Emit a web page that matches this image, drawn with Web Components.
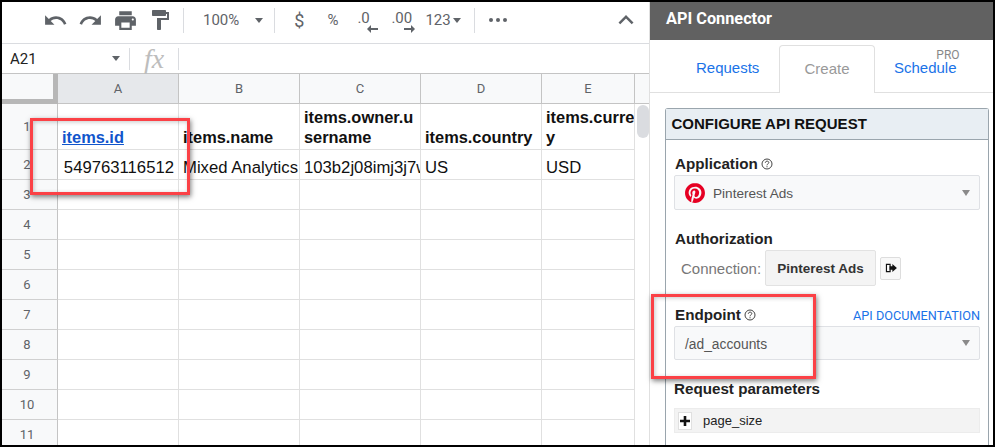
<!DOCTYPE html>
<html><head><meta charset="utf-8"><style>
html,body{margin:0;padding:0;background:#fff}
body{width:995px;height:447px;overflow:hidden}
</style></head><body>
<app-shell>
  <sheet-pane slot="left"></sheet-pane>
  <connector-sidebar slot="right"></connector-sidebar>
</app-shell>
<script>
const P={
undo:"M12.5 8c-2.65 0-5.05.99-6.9 2.6L2 7v9h9l-3.62-3.62c1.39-1.16 3.16-1.88 5.12-1.88 3.54 0 6.55 2.31 7.6 5.5l2.37-.78C21.08 11.03 17.15 8 12.5 8z",
redo:"M18.4 10.6C16.55 8.99 14.15 8 11.5 8c-4.65 0-8.58 3.03-9.96 7.22L3.9 16c1.05-3.19 4.05-5.5 7.6-5.5 1.95 0 3.73.72 5.12 1.88L13 16h9V7l-3.6 3.6z",
print:"M19 8H5c-1.66 0-3 1.34-3 3v6h4v4h12v-4h4v-6c0-1.66-1.34-3-3-3zm-3 11H8v-5h8v5zm3-7c-.55 0-1-.45-1-1s.45-1 1-1 1 .45 1 1-.45 1-1 1zm-1-9H6v4h12V3z",
paint:"M18 4V3c0-.55-.45-1-1-1H5c-.55 0-1 .45-1 1v4c0 .55.45 1 1 1h12c.55 0 1-.45 1-1V6h1v4H9v11c0 .55.45 1 1 1h2c.55 0 1-.45 1-1v-9h8V4h-3z",
chev:"M12 8l-6 6 1.41 1.41L12 10.83l4.59 4.58L18 14z",
pin:"M12.017 0C5.396 0 .029 5.367.029 11.987c0 5.079 3.158 9.417 7.618 11.162-.105-.949-.199-2.403.041-3.439.219-.937 1.406-5.957 1.406-5.957s-.359-.72-.359-1.781c0-1.663.967-2.911 2.168-2.911 1.024 0 1.518.769 1.518 1.688 0 1.029-.653 2.567-.992 3.992-.285 1.193.6 2.165 1.775 2.165 2.128 0 3.768-2.245 3.768-5.487 0-2.861-2.063-4.869-5.008-4.869-3.41 0-5.409 2.562-5.409 5.199 0 1.033.394 2.143.889 2.741.099.12.112.225.085.345-.09.375-.293 1.199-.334 1.363-.053.225-.172.271-.401.165-1.495-.69-2.433-2.878-2.433-4.646 0-3.776 2.748-7.252 7.92-7.252 4.158 0 7.392 2.967 7.392 6.923 0 4.135-2.607 7.462-6.233 7.462-1.214 0-2.354-.629-2.758-1.379l-.749 2.848c-.269 1.045-1.004 2.352-1.498 3.146 1.123.345 2.306.535 3.55.535 6.607 0 11.985-5.365 11.985-11.987C23.97 5.39 18.592.026 11.985.026L12.017 0z"
};
const ico=(d,s,c='#5f6368')=>`<svg width="${s}" height="${s}" viewBox="0 0 24 24" fill="${c}"><path d="${d}"/></svg>`;
const def=(n,html)=>customElements.define(n,class extends HTMLElement{constructor(){super();this.attachShadow({mode:'open'}).innerHTML=typeof html==='function'?html(this):html}});

def('app-shell',`<style>
:host{display:block;position:relative;width:995px;height:447px;box-sizing:border-box;overflow:hidden;border:2px solid #000;background:#fff}
.row{display:flex;height:100%}
.box{position:absolute;box-sizing:border-box;border:3px solid #fb4146;box-shadow:1px 2px 5px rgba(0,0,0,.5),inset 1px 1px 4px rgba(0,0,0,.22)}
.b1{left:28px;top:116px;width:160px;height:77px}
.b2{left:649px;top:292px;width:165px;height:85px}
</style><div class="row"><slot name="left"></slot><slot name="right"></slot></div>
<div class="box b1"></div><div class="box b2"></div>`);

def('tool-caret',`<style>:host{display:inline-block;flex:none;width:0;height:0;border-left:4.5px solid transparent;border-right:4.5px solid transparent;border-top:5px solid #5f6368}</style>`);

def('sheet-toolbar',`<style>
:host{display:flex;align-items:center;height:42px;box-sizing:border-box;padding:0 0 5px 35.5px;border-bottom:1px solid #dadce0;font:15px Roboto,sans-serif;color:#5f6368;flex:none}
.b{width:35px;display:flex;justify-content:center;align-items:center;flex:none}
.sep{width:1px;height:25px;background:#dadce0;flex:none}
.t{flex:none}
.dec{position:relative;flex:none;height:30px;display:block;line-height:27px}
.dec svg{position:absolute;top:20px}
.dots{display:flex;gap:3px;margin-left:14px}
.dots i{width:4px;height:4px;border-radius:50%;background:#5f6368}
</style>
<span class="b">${ico(P.undo,25)}</span><span class="b">${ico(P.redo,25)}</span><span class="b">${ico(P.print,25)}</span><span class="b">${ico(P.paint,24)}</span>
<span class="sep" style="margin-left:5.5px"></span>
<span class="t" style="margin-left:19px">100%</span><tool-caret style="margin-left:16px"></tool-caret>
<span class="sep" style="margin-left:11px"></span>
<span class="t" style="margin-left:19px;font-size:18px">$</span>
<span class="t" style="margin-left:23px">%</span>
<span class="dec" style="margin-left:19px;width:22px">.0<svg style="left:10px" width="11" height="8" viewBox="0 0 11 8" fill="#5f6368"><path d="M4 0v3h7v2H4v3L0 4z"/></svg></span>
<span class="dec" style="margin-left:12px;width:24px">.00<svg style="left:13px" width="11" height="8" viewBox="0 0 11 8" fill="#5f6368"><path d="M7 0v3H0v2h7v3l4-4z"/></svg></span>
<span class="t" style="margin-left:10px">123</span><tool-caret style="margin-left:2px"></tool-caret>
<span class="sep" style="margin-left:13px"></span>
<span class="dots"><i></i><i></i><i></i></span>
<span class="b" style="margin-left:102px">${ico(P.chev,30,'#5f6368')}</span>`);

def('formula-bar',`<style>
:host{display:flex;align-items:center;height:30px;box-sizing:border-box;border-bottom:1px solid #c4c4c4;flex:none;font:15px Roboto,sans-serif;color:#222;padding-left:8px}
.n{width:102px}
.sep{width:1px;height:22px;background:#dadce0;flex:none}
.fx{font:italic 28px "Liberation Serif",serif;color:#bdbdbd;width:48px;text-align:center;line-height:30px}
</style><span class="n">A21</span><tool-caret style="margin-right:9px"></tool-caret><span class="sep"></span><span class="fx">fx</span><span class="sep"></span>`);

def('sheet-grid',()=>{
 const cols=['A','B','C','D','E'];
 const heads=[['<a>items.id</a>','items.name','items.owner.u<br>sername','items.country','items.curre<br>y'],
 ['<span class="r">549763116512</span>','Mixed Analytics','103b2j08imj3j7w','US','USD']];
 let h=`<div class="corner"></div>`+cols.map((c,i)=>`<div class="ch ${i==0?'sel':''}">${c}</div>`).join('')+`<div class="ch end"></div>`;
 for(let r=1;r<=11;r++){
  h+=`<div class="rh">${r}</div>`;
  for(let c=0;c<5;c++){const v=r<=2?heads[r-1][c]:'';h+=`<div class="c ${r==1?'hd':''} ${r==2?'val':''}">${v}</div>`}
  h+=`<div class="sb">${r==1?'<i></i>':''}</div>`;
 }
 return `<style>
:host{display:grid;grid-template-columns:56px 121px 121px 121px 121px 93px 15px;grid-template-rows:30px 46px repeat(10,30px);overflow:hidden;flex:1;min-height:0;font:16.7px "Liberation Sans",Arial,sans-serif;color:#000}
div{box-sizing:border-box}
.corner{background:#f8f9fa;border-right:5px solid #b7b7b7;border-bottom:5px solid #b7b7b7}
.ch{background:#f8f9fa;border-right:1px solid #c4c4c4;border-bottom:1px solid #c4c4c4;font:13px Roboto,sans-serif;color:#5f6368;display:flex;align-items:center;justify-content:center}
.ch.sel{background:#e6e8eb}
.ch.end{border-right:0}
.rh{background:#f8f9fa;border-right:1px solid #c4c4c4;border-bottom:1px solid #d0d0d0;font:13px Roboto,sans-serif;color:#5f6368;display:flex;align-items:center;justify-content:center;padding-right:5px}
.c{border-right:1px solid #e0e0e0;border-bottom:1px solid #e0e0e0;overflow:hidden;white-space:nowrap;padding:0 4px}
.hd{font-weight:bold;font-size:16.4px;line-height:20px;display:flex;align-items:flex-end;padding-bottom:2px;color:#111}
.val{line-height:36px;color:#111}
.r{display:block;text-align:right}
a{color:#1155cc;text-decoration:underline}
.sb{position:relative;overflow:visible}
.sb i{position:absolute;left:2px;top:1px;width:12px;height:33px;border-radius:6px;background:#dadce0}
</style>${h}`});

def('sheet-pane',`<style>:host{display:flex;flex-direction:column;width:647px;height:100%;border-right:1px solid #e0e0e0;flex:none;overflow:hidden}</style>
<sheet-toolbar></sheet-toolbar><formula-bar></formula-bar><sheet-grid></sheet-grid>`);

def('help-mark',`<style>:host{display:inline-flex;margin-left:3px;vertical-align:-1px}</style><svg width="12" height="12" viewBox="0 0 12 12" fill="none" stroke="#444" stroke-width="1"><circle cx="6" cy="6" r="5"/><path d="M4.300 4.800c0-2.200 3.500-2.200 3.500-.2 0 1.200-1.800 1.200-1.800 2.700"/><path d="M6 8.200v1.100"/></svg>`);

def('select-box',`<style>
:host{display:flex;align-items:center;height:var(--h,35px);box-sizing:border-box;border:1px solid #dfe1e5;border-radius:2px;background:#f8f9fa;font:13.6px "Liberation Sans",Arial,sans-serif;color:#555;padding:0 10px;margin-left:8px;width:306px}
.s{flex:1;display:flex;align-items:center;gap:8px;font-size:var(--fs,13.6px);padding-top:var(--pt,1px)}
.a{width:0;height:0;border-left:4.5px solid transparent;border-right:4.5px solid transparent;border-top:6px solid #8a8a8a;margin-right:-1px}
</style><span class="s"><slot></slot></span><span class="a"></span>`);

def('connector-sidebar',`<style>
:host{display:block;width:343px;height:100%;overflow:hidden;flex:none;font-family:"Liberation Sans",Arial,sans-serif;color:#222}
header{height:38px;background:#616161;color:#fff;font:bold 16.3px Roboto,sans-serif;padding-left:16px;line-height:33px}
nav{display:flex;height:53px;box-sizing:border-box;border-bottom:1px solid #e0e0e0;padding-top:5px;padding-left:129px;font-size:15px;position:relative;color:#1a73e8}
nav span{display:block;line-height:46px}
.rq{position:absolute;left:46px;top:5px}
.cr{width:96px;height:48px;box-sizing:border-box;border:1px solid #e0e0e0;border-bottom:0;border-radius:4px 4px 0 0;background:#fff;color:#999;text-align:center}
.sc{position:relative;margin-left:19px}
.sc b{position:absolute;right:-3px;top:3px;font:12px Roboto,sans-serif;color:#888;line-height:14px}
.panel{margin:15px 0 0 15px;width:324px;box-sizing:border-box;border:1px solid #9aa5ad;border-bottom:0;border-radius:3px 3px 0 0;height:340px}
.ph{height:30px;background:#e8eef3;border-bottom:1px solid #9aa5ad;font:bold 15px "Liberation Sans",Arial,sans-serif;line-height:30px;padding-left:5.5px;color:#111}
.l{font:bold 15.2px "Liberation Sans",Arial,sans-serif;color:#222;padding-left:9px;height:20px;line-height:20px}
.conn{display:flex;align-items:center;margin:1px 0 0 15px;font-size:15px;color:#777}
.btn{margin-left:4px;width:111px;height:36px;box-sizing:border-box;background:#f4f4f4;border:1px solid #e2e2e2;border-radius:2px;color:#333;font:bold 13.5px "Liberation Sans",Arial,sans-serif;display:flex;align-items:center;justify-content:center}
.ib{margin-left:4px;width:21px;height:23px;box-sizing:border-box;border:1px solid #ddd;background:#f8f8f8;border-radius:2px;display:flex;align-items:center;justify-content:center}
.ep{display:flex;align-items:center;justify-content:space-between;width:314px}
.doc{font:12.7px Roboto,sans-serif;color:#1a73e8}
.pr{margin:0 0 0 8px;width:306px;height:25px;box-sizing:border-box;background:#f3f3f3;border:1px solid #ececec;display:flex;align-items:center;font:13px "Liberation Sans",Arial,sans-serif;color:#222}
.plus{width:14px;height:18px;margin:0 11px 0 3px;background:#fff;border:1px solid #e0e0e0;box-sizing:border-box;display:flex;align-items:center;justify-content:center}
</style>
<header>API Connector</header>
<nav><span class="rq">Requests</span><span class="cr">Create</span><span class="sc"><b>PRO</b>Schedule</span></nav>
<div class="panel">
 <div class="ph">CONFIGURE API REQUEST</div>
 <div class="l" style="margin-top:14px;margin-bottom:1px">Application<help-mark></help-mark></div>
 <select-box><svg width="20" height="20" viewBox="0 0 24 24" fill="#e60023"><path d="${P.pin}"/></svg>Pinterest Ads</select-box>
 <div class="l" style="margin-top:19px">Authorization</div>
 <div class="conn">Connection:<span class="btn">Pinterest Ads</span><span class="ib"><svg width="12" height="10" viewBox="0 0 13 11"><path d="M1.500 1.500h4v8h-4z" fill="#fff" stroke="#111" stroke-width="1.3"/><path d="M5 3.500h3V1l5 4.500-5 4.500V7.500H5z" fill="#111"/></svg></span></div>
 <div class="ep" style="margin-top:19px;margin-bottom:1px"><span class="l">Endpoint<help-mark></help-mark></span><span class="doc">API DOCUMENTATION</span></div>
 <select-box style="--fs:13.8px;--h:34px;--pt:3px">/ad_accounts</select-box>
 <div class="l" style="margin-top:19px;padding-left:8px;margin-bottom:9px">Request parameters</div>
 <div class="pr"><span class="plus"><svg width="10" height="10" viewBox="0 0 10 10" fill="#111"><path d="M3.700 0h2.600v3.700H10v2.600H6.300V10H3.700V6.300H0V3.700h3.700z"/></svg></span>page_size</div>
</div>`);
</script>
</body></html>
